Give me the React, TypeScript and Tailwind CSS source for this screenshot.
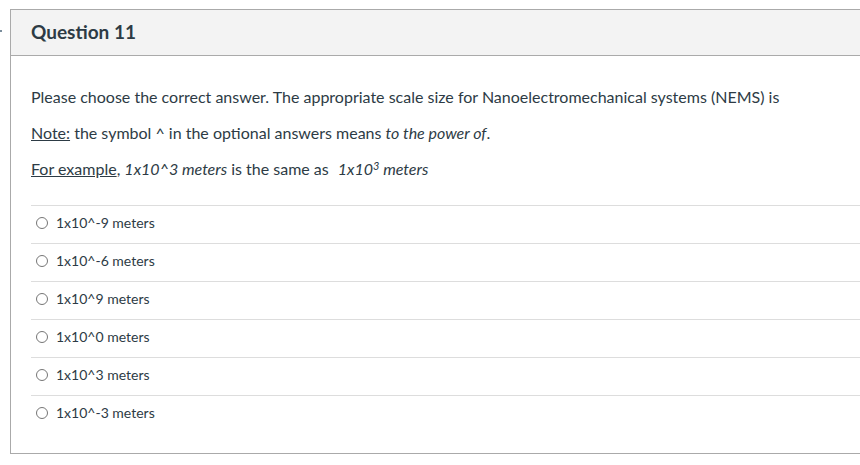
const ANSWERS = [
  '1x10^-9 meters',
  '1x10^-6 meters',
  '1x10^9 meters',
  '1x10^0 meters',
  '1x10^3 meters',
  '1x10^-3 meters',
];

export default function App() {
  return (
    <div className="relative h-[465px] w-[860px] overflow-hidden bg-white font-['Lato',sans-serif] text-[#2d3b45]">
      {/* clipped marker at the far left */}
      <span className="absolute left-0 top-[30px] h-[2px] w-[2px] bg-[#7a8d9c]" />

      <div className="ml-[10px] mt-[9px] w-[880px] border border-[#aaaaaa]">
        {/* Header */}
        <div className="flex h-[46px] items-center border-b border-[#aaaaaa] bg-[#f3f3f3] pb-[3px] pl-[20px]">
          <h2 className="text-[19px] font-bold leading-none">Question 11</h2>
        </div>

        {/* Body */}
        <div className="pl-[20px] pt-[29px] pb-[20px]">
          <div className="flex flex-col gap-3 text-[16px] leading-6">
            <p>
              Please choose the correct answer. The appropriate scale size for Nanoelectromechanical systems (NEMS) is
            </p>
            <p>
              <span className="underline">Note:</span> the symbol ^ in the optional answers means{' '}
              <em>to the power of</em>.
            </p>
            <p>
              <span className="underline">For example</span>, <em>1x10^3 meters</em> is the same as
              <em className="ml-[9px]">
                1x10<sup className="text-[11px]">3</sup> meters
              </em>
            </p>
          </div>

          <div className="mt-6">
            {ANSWERS.map(a => (
              <div key={a} className="flex h-[38px] items-center border-t border-[#dddddd] pb-[4px] pl-[5px]">
                <span className="h-[12px] w-[12px] rounded-full border border-[#767676] bg-white" />
                <span className="ml-[8px] text-[14px] leading-5">{a}</span>
              </div>
            ))}
          </div>
        </div>
      </div>
    </div>
  );
}
